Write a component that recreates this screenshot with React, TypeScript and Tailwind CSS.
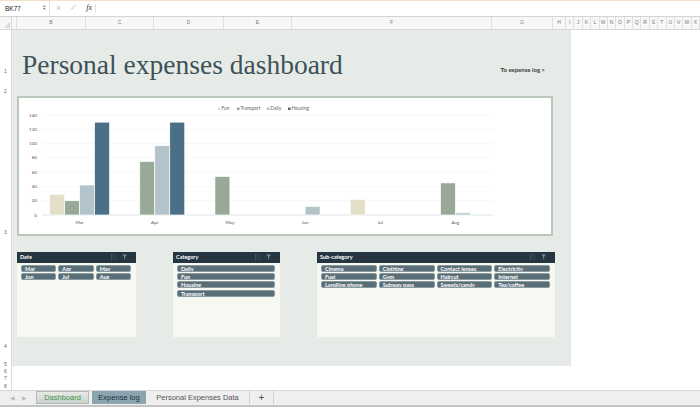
import React from "react";

const columns = [
  { l: "", c: "w-[5px]" },
  { l: "B", c: "w-[69px]" },
  { l: "C", c: "w-[68px]" },
  { l: "D", c: "w-[70px]" },
  { l: "E", c: "w-[68px]" },
  { l: "F", c: "w-[200px]" },
  { l: "G", c: "w-[61px]" },
  { l: "H", c: "w-[13px]" },
  ..."IJKLMNOPQRSTUVWX".split("").map((l) => ({ l, c: "w-[8.375px]" })),
];

const rows = [
  { n: "1", c: "h-[45.5px]" },
  { n: "2", c: "h-[20.3px]" },
  { n: "3", c: "h-[140.7px]" },
  { n: "4", c: "h-[114px]" },
  { n: "5", c: "h-[18px]" },
  { n: "6", c: "h-[7px]" },
  { n: "7", c: "h-[7px]" },
  { n: "8", c: "h-[8px]" },
];

const series = [
  { name: "Fun", color: "#e4dfc8" },
  { name: "Transport", color: "#98aa97" },
  { name: "Daily", color: "#b3c3ca" },
  { name: "Housing", color: "#4b6f86" },
];

const months = [
  { m: "Mar", v: [29, 20, 42, 130] },
  { m: "Apr", v: [0, 75, 97, 130] },
  { m: "May", v: [0, 54, 0, 0] },
  { m: "Jun", v: [0, 0, 12, 0] },
  { m: "Jul", v: [22, 0, 0, 0] },
  { m: "Aug", v: [0, 45, 3, 0] },
];

function Chart() {
  const x0 = 23;
  const x1 = 474;
  const cw = (x1 - x0) / 6;
  const y0 = 117;
  const k = 100 / 140;
  const legendX = [199, 218, 248, 269];
  return (
    <svg width="532" height="136" viewBox="0 0 532 136">
      {series.map((s, i) => (
        <g key={s.name}>
          <rect x={legendX[i]} y={9.5} width={2.6} height={2.6} fill={s.color} />
          <text x={legendX[i] + 3.5} y={12.3} fontSize="4.8" fill="#666" fontFamily="Lato, sans-serif">
            {s.name}
          </text>
        </g>
      ))}
      {[0, 20, 40, 60, 80, 100, 120, 140].map((t) => (
        <g key={t}>
          <line x1={x0} x2={x1} y1={y0 - t * k} y2={y0 - t * k} stroke={t === 0 ? "#d3dee5" : "#f1f1f1"} strokeWidth={t === 0 ? 0.8 : 0.6} />
          <text x={18} y={y0 - t * k + 1.6} fontSize="4.6" textAnchor="end" fill="#555" fontFamily="Lato, sans-serif">
            {t}
          </text>
        </g>
      ))}
      {months.map((mo, i) => {
        const c = x0 + cw * (i + 0.5);
        return (
          <g key={mo.m}>
            {mo.v.map((v, j) =>
              v > 0 ? (
                <rect key={j} x={c - 30 + 15 * j} y={y0 - v * k} width={15} height={v * k} fill={series[j].color} stroke="#ffffff" strokeWidth={0.7} />
              ) : null
            )}
            <text x={c} y={125.6} fontSize="4.6" textAnchor="middle" fill="#555" fontFamily="Lato, sans-serif">
              {mo.m}
            </text>
          </g>
        );
      })}
    </svg>
  );
}

function SlicerIcons() {
  return (
    <div className="flex items-center gap-[5px]">
      <svg width="6" height="6" viewBox="0 0 6 6">
        <rect x="0" y="0.5" width="1.2" height="1" fill="#4f7d5c" />
        <rect x="0" y="2.5" width="1.2" height="1" fill="#4f7d5c" />
        <rect x="0" y="4.5" width="1.2" height="1" fill="#4f7d5c" />
        <rect x="2" y="0.6" width="3.5" height="0.8" fill="#3c4f58" />
        <rect x="2" y="2.6" width="3.5" height="0.8" fill="#3c4f58" />
        <rect x="2" y="4.6" width="3.5" height="0.8" fill="#3c4f58" />
      </svg>
      <svg width="6" height="6" viewBox="0 0 6 6">
        <path d="M0.3 0.5 H5 L3.1 2.8 V5.6 L2.2 5 V2.8 Z" fill="#7c8c92" />
      </svg>
    </div>
  );
}

function Slicer({ title, items, w, grid }: { title: string; items: string[]; w: string; grid: string }) {
  return (
    <div className={`${w} h-full flex flex-col bg-[#f8f8f3]`}>
      <div className="h-[11px] bg-[#253640] flex items-center justify-between pl-[3px] pr-[8px]">
        <span className="text-[5.5px] font-bold text-white font-['Lato',sans-serif]">{title}</span>
        <SlicerIcons />
      </div>
      <div className={`grid ${grid} gap-x-[2px] gap-y-[1.4px] pl-[4px] pr-[5px] pt-[2px]`}>
        {items.map((it) => (
          <div
            key={it}
            className="h-[7px] rounded-[2px] bg-[#5a6e78] border-[0.5px] border-[#8799a1] pl-[3px] text-[5.5px] leading-[6px] font-bold text-white font-['Lato',sans-serif] whitespace-nowrap overflow-hidden"
          >
            {it}
          </div>
        ))}
      </div>
    </div>
  );
}

export default function App() {
  return (
    <div className="w-[700px] h-[407px] overflow-hidden bg-white flex flex-col font-['Liberation_Sans',Arial,sans-serif]">
      {/* formula bar */}
      <div className="h-[17px] border-t border-t-[#f1e1c2] border-b border-b-[#d4d4d4] flex items-center">
        <div className="w-[50px] h-full flex items-center justify-between pl-[5px] pr-[3px] border-r border-[#e2e2e2]">
          <span className="text-[6.5px] text-[#222]">BK77</span>
          <div className="flex flex-col text-[3.5px] leading-[3.5px] text-[#666]">
            <span>▲</span>
            <span>▼</span>
          </div>
        </div>
        <span className="ml-[6px] text-[9px] text-[#c4c4c4]">×</span>
        <span className="ml-[9px] text-[8px] text-[#c4c4c4]">✓</span>
        <span className="ml-[9px] text-[8px] italic text-[#333] font-['Liberation_Serif',serif]">fx</span>
        <div className="ml-[3px] w-px h-[9px] bg-[#e0e0e0]" />
      </div>

      {/* column headers */}
      <div className="h-[13px] flex bg-[#f7f7f7] border-b border-[#d8d8d8]">
        <div className="w-[12px] h-full border-r border-[#d8d8d8] relative">
          <svg className="absolute right-[1px] bottom-[1px]" width="6" height="6" viewBox="0 0 6 6">
            <path d="M6 0 V6 H0 Z" fill="#d9d9d9" />
          </svg>
        </div>
        {columns.map((c, i) => (
          <div key={i} className={`${c.c} shrink-0 h-full border-r border-[#e0e0e0] flex items-center justify-center text-[5px] text-[#777]`}>
            {c.l}
          </div>
        ))}
      </div>

      {/* sheet body */}
      <div className="flex-1 flex">
        <div className="w-[12px] shrink-0 border-r border-[#dcdcdc] flex flex-col">
          {rows.map((r) => (
            <div key={r.n} className={`${r.c} shrink-0 flex items-end justify-center pb-[1px] text-[5px] leading-[5px] text-[#666]`}>
              {r.n}
            </div>
          ))}
        </div>
        <div className="flex-1">
          <div className="w-[559px] h-[336px] bg-[#e7ebe8] flex flex-col">
            <div className="h-[55px] flex justify-between">
              <h1 className="ml-[10px] mt-[21px] text-[27.5px] leading-[27.5px] text-[#3d5257] font-['Liberation_Serif',Georgia,serif] whitespace-nowrap">
                Personal expenses dashboard
              </h1>
              <span className="mt-[35px] mr-[26px] text-[6px] font-bold text-[#3a3a3a] font-['Lato',sans-serif]">
                To expense log &gt;
              </span>
            </div>
            <div className="mt-[11px] ml-[5px] w-[536px] h-[140px] bg-white border-2 border-[#bcc7bc]">
              <Chart />
            </div>
            <div className="mt-[16px] ml-[5px] h-[85px] flex gap-[37px]">
              <Slicer title="Date" w="w-[119px]" grid="grid-cols-3" items={["Mar", "Apr", "May", "Jun", "Jul", "Aug"]} />
              <Slicer title="Category" w="w-[107px]" grid="grid-cols-1" items={["Daily", "Fun", "Housing", "Transport"]} />
              <Slicer
                title="Sub-category"
                w="w-[238px]"
                grid="grid-cols-4"
                items={[
                  "Cinema",
                  "Clothing",
                  "Contact lenses",
                  "Electricity",
                  "Fuel",
                  "Gym",
                  "Haircut",
                  "Internet",
                  "Landline phone",
                  "Subway pass",
                  "Sweets/candy",
                  "Tea/coffee",
                ]}
              />
            </div>
          </div>
        </div>
      </div>

      {/* sheet tabs */}
      <div className="h-[17px] bg-[#efefef] border-t border-[#d6d6d6] border-b-2 border-b-[#c4c4c4] flex items-start text-[7.5px]">
        <span className="ml-[10px] mt-[3px] text-[6px] text-[#bdbdbd]">◀</span>
        <span className="ml-[7px] mt-[3px] text-[6px] text-[#bdbdbd]">▶</span>
        <div className="ml-[9px] w-[53px] h-[13px] bg-gradient-to-b from-[#e6eae6] to-[#ccd3cc] border border-[#b3bab3] flex items-center justify-center text-[#3f9150]">
          Dashboard
        </div>
        <div className="ml-[3px] w-[54px] h-[13px] bg-[#8ca4af] flex items-center justify-center text-[#1e2e37]">
          Expense log
        </div>
        <div className="w-[104px] h-[13px] flex items-center justify-center text-[#555] border-r border-[#d0d0d0]">
          Personal Expenses Data
        </div>
        <div className="w-[24px] h-[13px] flex items-center justify-center text-[10px] text-[#555] border-r border-[#d0d0d0]">
          +
        </div>
      </div>
    </div>
  );
}
